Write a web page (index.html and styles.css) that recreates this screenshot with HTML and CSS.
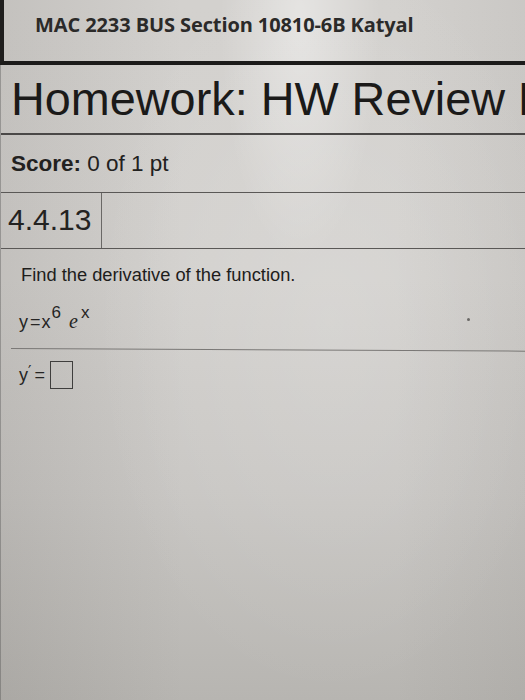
FILE: index.html
```html
<!DOCTYPE html>
<html>
<head>
<meta charset="utf-8">
<link rel="stylesheet" href="styles.css">
</head>
<body>
<div class="screen">
  <header class="course">MAC 2233 BUS Section 10810-6B Katyal</header>
  <section class="title">Homework: HW Review E</section>
  <div class="score"><b>Score:</b> 0 of 1 pt</div>
  <div class="qbar">
    <div class="qnum">4.4.13</div>
    <div class="qrest"></div>
  </div>
  <div class="question">
    <p class="prompt">Find the derivative of the function.</p>
    <div class="formula">
      <span class="v">y</span><span class="eq">=</span><span class="v">x</span><span class="sup six">6</span><span class="e">e</span><span class="sup">x</span>
    </div>
    <div class="divider"></div>
    <div class="answer">
      <span class="v">y</span><span class="prime">′</span><span class="eq2">=</span><span class="box"></span>
    </div>
  </div>
  <span class="speck"></span>
</div>
</body>
</html>
```

FILE: styles.css
```css
html, body {
  margin: 0;
  padding: 0;
}
body {
  width: 525px;
  height: 700px;
  overflow: hidden;
  background:
    radial-gradient(ellipse 80px 240px at 300px 20px, rgba(255,255,255,0.40), rgba(255,255,255,0) 100%),
    radial-gradient(ellipse 240px 380px at 330px 320px, rgba(255,255,255,0.14), rgba(255,255,255,0) 100%),
    linear-gradient(to right, rgba(60,55,50,0.10) 0%, rgba(60,55,50,0) 35%, rgba(60,55,50,0) 75%, rgba(60,55,50,0.06) 100%),
    linear-gradient(to bottom, #d3d1ce 0%, #d2d0cd 40%, #c8c6c3 70%, #b7b5b1 100%);
  font-family: "Liberation Sans", Arial, sans-serif;
  color: #1d1c1b;
}
.screen {
  position: relative;
  height: 700px;
  border-left: 1px solid rgba(70,70,70,0.35);
}
.course {
  box-sizing: border-box;
  height: 65px;
  margin-left: -1px;
  border-left: 4px solid #1f1e1d;
  border-bottom: 4px solid #1c1b1a;
  padding: 15px 0 0 31px;
  font-family: "Open Sans", "DejaVu Sans", sans-serif;
  font-weight: 700;
  font-size: 20px;
  line-height: 20px;
  color: #2b2a29;
  letter-spacing: -0.1px;
}
.title {
  box-sizing: border-box;
  height: 70px;
  padding: 11px 0 0 10px;
  font-size: 46.8px;
  line-height: 46px;
  white-space: nowrap;
  overflow: hidden;
  border-bottom: 2px solid #4a4847;
  color: #1b1a19;
}
.score {
  box-sizing: border-box;
  height: 58px;
  padding: 19px 0 0 10px;
  font-size: 22.5px;
  line-height: 20px;
  border-bottom: 1px solid #5a5856;
  color: #222120;
}
.score b {
  font-weight: 700;
}
.qbar {
  box-sizing: border-box;
  height: 56px;
  display: flex;
  border-bottom: 1px solid #5a5856;
}
.qnum {
  box-sizing: border-box;
  width: 101px;
  padding: 12px 0 0 7px;
  font-size: 30px;
  line-height: 30px;
  border-right: 1px solid #6a6866;
  color: #232221;
}
.qrest {
  flex: 1;
}
.question {
  padding: 0;
}
.prompt {
  margin: 0;
  padding: 17px 0 0 20px;
  font-size: 18.3px;
  line-height: 18px;
  color: #1e1d1c;
}
.formula {
  display: flex;
  align-items: baseline;
  margin-top: 27px;
  padding-left: 18px;
  font-size: 18px;
  line-height: 20px;
  height: 20px;
  color: #262524;
}
.formula .eq {
  margin: 0 1px 0 2px;
}
.formula .sup {
  font-size: 17px;
  position: relative;
  top: -10px;
}
.formula .six {
  margin: 0 8px 0 1px;
}
.formula .e {
  font-family: "Liberation Serif", "Times New Roman", serif;
  font-style: italic;
  font-size: 20px;
  margin-right: 3px;
}
.divider {
  margin: 17px 0 0 10px;
  height: 1px;
  background: #7a7876;
  transform: rotate(0.3deg);
  transform-origin: left center;
}
.answer {
  display: flex;
  align-items: center;
  margin-top: 12px;
  padding-left: 18px;
  height: 28px;
  font-size: 18px;
  color: #262524;
}
.answer .prime {
  font-family: "DejaVu Sans", sans-serif;
  font-size: 15px;
  align-self: flex-start;
  margin: 2px 0 0 0;
}
.answer .eq2 {
  margin: 0 5px 0 3px;
}
.answer .box {
  box-sizing: border-box;
  width: 23px;
  height: 28px;
  border: 1.5px solid #3f3e3d;
}
.speck {
  position: absolute;
  left: 466px;
  top: 318px;
  width: 3px;
  height: 3px;
  border-radius: 50%;
  background: #6a6866;
}
```
